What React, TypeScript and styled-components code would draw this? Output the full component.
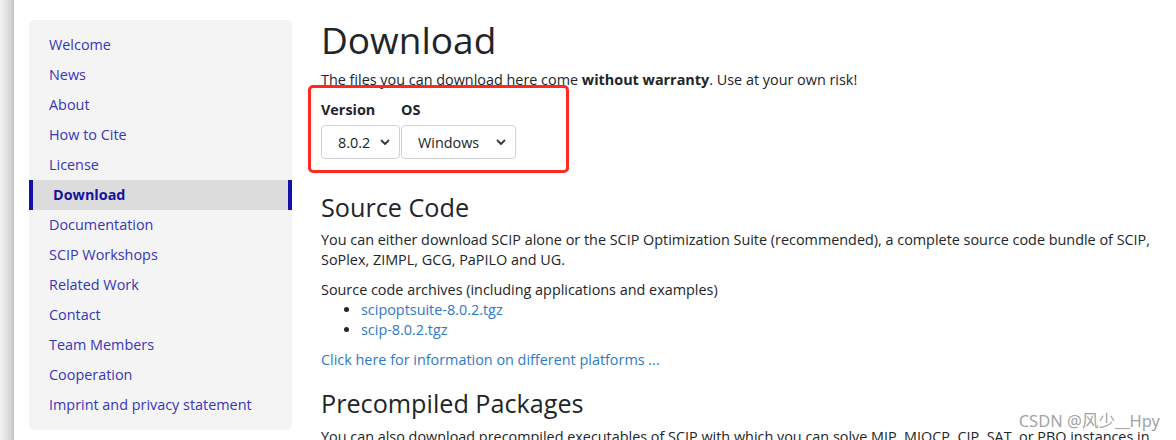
import React from "react";
import styled, { createGlobalStyle } from "styled-components";

const Global = createGlobalStyle`
  html, body { margin: 0; padding: 0; background: #fff; }
  body {
    font-family: "Open Sans", "Noto Sans", Arial, sans-serif;
    font-size: 14.4px;
    color: #212529;
    overflow: hidden;
  }
  * { box-sizing: border-box; }
`;

const Page = styled.div`
  position: relative;
  display: flex;
  align-items: flex-start;
  width: 1176px;
  height: 440px;
  overflow: hidden;
`;

const EdgeStrip = styled.div`
  flex: 0 0 14px;
  align-self: stretch;
  background: linear-gradient(to right, #f3f3f3 0%, #e2e2e2 50%, #cfcfcf 85%, #bdbdbd 100%);
`;

const Sidebar = styled.nav`
  flex: 0 0 263px;
  margin: 20px 0 0 15px;
  padding: 10px 0;
  background: #f4f4f4;
  border-radius: 5px;
  display: flex;
  flex-direction: column;
`;

const NavItem = styled.a<{ $active?: boolean }>`
  display: block;
  height: 30px;
  line-height: 30px;
  padding-left: 20px;
  font-size: 14.4px;
  text-decoration: none;
  color: ${(p) => (p.$active ? "#13139e" : "#3636bc")};
  font-weight: ${(p) => (p.$active ? 700 : 400)};
  background: ${(p) => (p.$active ? "#dcdcdc" : "transparent")};
  border-left: ${(p) => (p.$active ? "4px solid #1212a6" : "0")};
  border-right: ${(p) => (p.$active ? "4px solid #1212a6" : "0")};
  white-space: nowrap;
`;

const Main = styled.main`
  flex: 1 1 auto;
  margin-left: 29px;
  min-width: 0;
`;

const H1 = styled.h1`
  margin: 18px 0 0;
  font-size: 37px;
  line-height: 44px;
  font-weight: 400;
  color: #212529;
`;

const H2 = styled.h2<{ $mt: number }>`
  margin: ${(p) => p.$mt}px 0 0;
  font-size: 25.2px;
  line-height: 34px;
  font-weight: 400;
  color: #212529;
`;

const P = styled.p<{ $mt: number }>`
  margin: ${(p) => p.$mt}px 0 0;
  line-height: 20px;
  white-space: nowrap;
`;

const Form = styled.div`
  margin-top: 10px;
  display: flex;
  gap: 1px;
`;

const Field = styled.div<{ $w: number }>`
  width: ${(p) => p.$w}px;
  display: flex;
  flex-direction: column;
  gap: 5px;
`;

const Label = styled.label`
  font-weight: 700;
  line-height: 20px;
`;

const SelectBox = styled.div`
  height: 34px;
  border: 1px solid #cfd3d7;
  border-radius: 4px;
  display: flex;
  align-items: center;
  justify-content: space-between;
  padding: 0 9px 0 16px;
  color: #212529;
  background: #fff;
`;

const Chevron = () => (
  <svg width="10" height="7" viewBox="0 0 10 7">
    <path d="M1.5 1.5 L5 5 L8.5 1.5" fill="none" stroke="#343a40" strokeWidth="1.8" strokeLinecap="round" strokeLinejoin="round" />
  </svg>
);

const List = styled.ul`
  margin: 0;
  padding-left: 40px;
  line-height: 20px;
`;

const Link = styled.a`
  color: #2f79c9;
  text-decoration: none;
`;

const Highlight = styled.div`
  position: absolute;
  left: 308px;
  top: 85px;
  width: 261px;
  height: 88px;
  border: 3px solid #ff2a1f;
  border-radius: 5px;
  pointer-events: none;
`;

const Watermark = styled.div`
  position: absolute;
  right: 16px;
  top: 409px;
  font-family: "Noto Sans", "Noto Sans CJK SC", sans-serif;
  font-size: 16.5px;
  line-height: 24px;
  color: rgba(150, 150, 150, 0.9);
  white-space: nowrap;
`;

const navItems = [
  "Welcome",
  "News",
  "About",
  "How to Cite",
  "License",
  "Download",
  "Documentation",
  "SCIP Workshops",
  "Related Work",
  "Contact",
  "Team Members",
  "Cooperation",
  "Imprint and privacy statement",
];

export default function App() {
  return (
    <>
      <Global />
      <Page>
        <EdgeStrip />
        <Sidebar>
          {navItems.map((n) => (
            <NavItem key={n} $active={n === "Download"}>
              {n}
            </NavItem>
          ))}
        </Sidebar>
        <Main>
          <H1>Download</H1>
          <P $mt={8}>
            The files you can download here come <b>without warranty</b>. Use at your own risk!
          </P>
          <Form>
            <Field $w={79}>
              <Label>Version</Label>
              <SelectBox>
                <span>8.0.2</span>
                <Chevron />
              </SelectBox>
            </Field>
            <Field $w={115}>
              <Label>OS</Label>
              <SelectBox>
                <span>Windows</span>
                <Chevron />
              </SelectBox>
            </Field>
          </Form>
          <H2 $mt={31}>Source Code</H2>
          <P $mt={6}>
            You can either download SCIP alone or the SCIP Optimization Suite (recommended), a complete source code bundle of SCIP,
            <br />
            SoPlex, ZIMPL, GCG, PaPILO and UG.
          </P>
          <P $mt={10}>Source code archives (including applications and examples)</P>
          <List>
            <li>
              <Link>scipoptsuite-8.0.2.tgz</Link>
            </li>
            <li>
              <Link>scip-8.0.2.tgz</Link>
            </li>
          </List>
          <P $mt={10}>
            <Link>Click here for information on different platforms ...</Link>
          </P>
          <H2 $mt={16}>Precompiled Packages</H2>
          <P $mt={7}>
            You can also download precompiled executables of SCIP with which you can solve MIP, MIOCP, CIP, SAT, or PBO instances in
          </P>
        </Main>
        <Highlight />
        <Watermark>CSDN @风少__Hpy</Watermark>
      </Page>
    </>
  );
}
